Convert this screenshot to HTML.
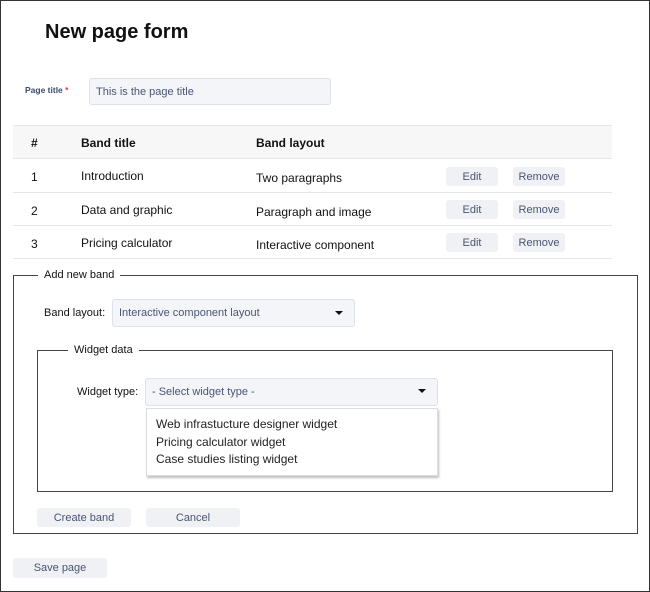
<!DOCTYPE html>
<html><head><style>
*{margin:0;padding:0;box-sizing:border-box}
body{width:650px;height:592px;position:relative;background:#fff;font-family:"Liberation Sans",Arial,sans-serif;color:#111;overflow:hidden}
.a{position:absolute;white-space:nowrap}
.frame{position:absolute;left:0;top:0;width:650px;height:592px;border:1px solid #333}
.in{position:absolute;background:#f3f5f8;border:1px solid #dde1e8;border-radius:3px;font-size:11px;color:#4a5572;padding-left:6px;display:flex;align-items:center}
.btn{position:absolute;background:#eff1f4;border-radius:3px;font-size:11px;color:#4a5572;display:flex;align-items:center;justify-content:center}
.tri{position:absolute;width:0;height:0;border-left:4px solid transparent;border-right:4px solid transparent;border-top:4px solid #111}
.line{position:absolute;left:13px;width:599px;height:1px;background:#e6e6e6}
.fs{position:absolute;border:1px solid #444}
.lg{position:absolute;background:#fff;font-size:11px;color:#111;padding:0 6px}
.t{font-size:12px}
</style></head><body>
<div class="frame"></div>
<div class="a" style="left:45px;top:21px;font-size:20px;font-weight:bold">New page form</div>
<div class="a" style="left:25px;top:85px;font-size:8.5px;font-weight:bold;color:#3c4a6b">Page title <span style="color:#e33">*</span></div>
<div class="in" style="left:89px;top:78px;width:242px;height:27px">This is the page title</div>

<div style="position:absolute;left:13px;top:125px;width:599px;height:33px;background:#f7f7f7;border-top:1px solid #e6e6e6"></div>
<div class="a t" style="left:31px;top:136px;font-weight:bold">#</div>
<div class="a t" style="left:81px;top:136px;font-weight:bold">Band title</div>
<div class="a t" style="left:256px;top:136px;font-weight:bold">Band layout</div>
<div class="line" style="top:158px"></div>
<div class="line" style="top:192px"></div>
<div class="line" style="top:225px"></div>
<div class="line" style="top:258px"></div>

<div class="a t" style="left:31px;top:170px">1</div>
<div class="a t" style="left:81px;top:169px">Introduction</div>
<div class="a t" style="left:256px;top:171px">Two paragraphs</div>
<div class="btn" style="left:446px;top:167px;width:52px;height:19px">Edit</div>
<div class="btn" style="left:513px;top:167px;width:52px;height:19px">Remove</div>

<div class="a t" style="left:31px;top:204px">2</div>
<div class="a t" style="left:81px;top:203px">Data and graphic</div>
<div class="a t" style="left:256px;top:205px">Paragraph and image</div>
<div class="btn" style="left:446px;top:200px;width:52px;height:19px">Edit</div>
<div class="btn" style="left:513px;top:200px;width:52px;height:19px">Remove</div>

<div class="a t" style="left:31px;top:237px">3</div>
<div class="a t" style="left:81px;top:236px">Pricing calculator</div>
<div class="a t" style="left:256px;top:238px">Interactive component</div>
<div class="btn" style="left:446px;top:233px;width:52px;height:19px">Edit</div>
<div class="btn" style="left:513px;top:233px;width:52px;height:19px">Remove</div>

<div class="fs" style="left:13px;top:275px;width:625px;height:259px"></div>
<div class="lg" style="left:38px;top:269px">Add new band</div>
<div class="a" style="left:44px;top:307px;font-size:11px">Band layout:</div>
<div class="in" style="left:112px;top:299px;width:243px;height:28px">Interactive component layout</div>
<div class="tri" style="left:335px;top:311px"></div>

<div class="fs" style="left:37px;top:350px;width:576px;height:142px"></div>
<div class="lg" style="left:68px;top:344px">Widget data</div>
<div class="a" style="left:77px;top:386px;font-size:11px">Widget type:</div>
<div class="in" style="left:145px;top:378px;width:293px;height:28px">- Select widget type -</div>
<div class="tri" style="left:418px;top:389px"></div>
<div style="position:absolute;left:146px;top:408px;width:292px;height:68px;background:#fff;border:1px solid #ddd;box-shadow:1px 2px 2px rgba(0,0,0,.25)"></div>
<div class="a t" style="left:156px;top:417px;color:#222">Web infrastucture designer widget</div>
<div class="a t" style="left:156px;top:435px;color:#222">Pricing calculator widget</div>
<div class="a t" style="left:156px;top:452px;color:#222">Case studies listing widget</div>

<div class="btn" style="left:37px;top:508px;width:94px;height:19px">Create band</div>
<div class="btn" style="left:146px;top:508px;width:94px;height:19px">Cancel</div>
<div class="btn" style="left:13px;top:558px;width:94px;height:20px">Save page</div>
</body></html>
